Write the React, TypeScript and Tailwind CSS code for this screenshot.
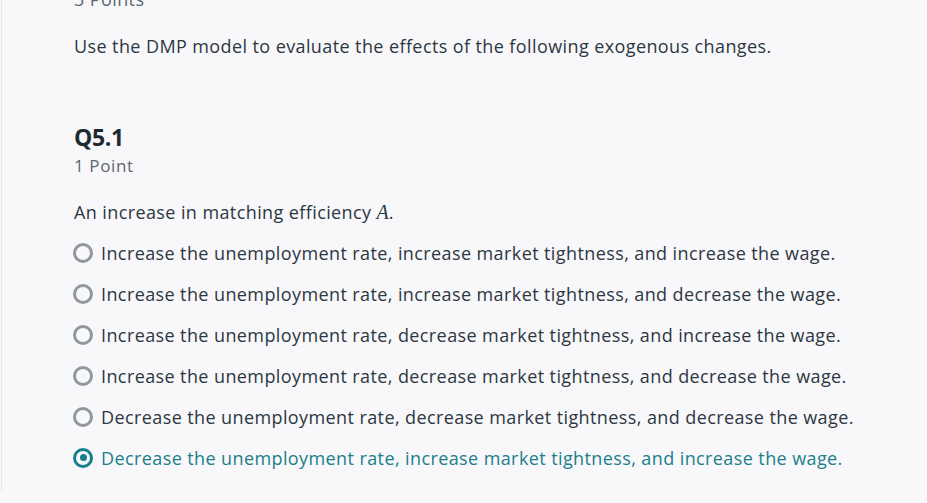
import { useState } from 'react'

const OPTIONS = [
  'Increase the unemployment rate, increase market tightness, and increase the wage.',
  'Increase the unemployment rate, increase market tightness, and decrease the wage.',
  'Increase the unemployment rate, decrease market tightness, and increase the wage.',
  'Increase the unemployment rate, decrease market tightness, and decrease the wage.',
  'Decrease the unemployment rate, decrease market tightness, and decrease the wage.',
  'Decrease the unemployment rate, increase market tightness, and increase the wage.',
]

function Radio({ checked }: { checked: boolean }) {
  return (
    <span
      className={`flex h-[20px] w-[20px] shrink-0 items-center justify-center rounded-full border-[3px] ${
        checked ? 'border-[#16808a]' : 'border-[#8f989f]'
      }`}
    >
      {checked && <span className="h-[7px] w-[7px] rounded-full bg-[#16808a]" />}
    </span>
  )
}

export default function App() {
  const [selected, setSelected] = useState(5)

  return (
    <div
      className="h-[503px] w-[927px] overflow-hidden bg-[#f8f8fa] text-[#2c3742] tracking-[0.4px]"
      style={{ fontFamily: '"Open Sans", "Liberation Sans", sans-serif' }}
    >
      <div className="ml-[1px] h-full border-l border-[#e3e5e8] pl-[72px]">
        <p className="-mt-[13px] text-[18px] leading-[24px] text-[#5c6770]">3 Points</p>

        <p className="mt-[23px] text-[18px] leading-[24px]">
          Use the DMP model to evaluate the effects of the following exogenous changes.
        </p>

        {/* Question 5.1 */}
        <h2 className="mt-[66px] text-[23px] font-bold leading-[26px] tracking-[-0.3px] text-[#1f2a30]">Q5.1</h2>
        <p className="mt-[5px] text-[17px] leading-[22px] tracking-[0.6px] text-[#5c6770]">1 Point</p>

        <p className="mt-[23px] text-[18px] leading-[24px]">
          An increase in matching efficiency{' '}
          <span
            className="text-[20px] italic tracking-normal"
            style={{ fontFamily: '"Liberation Serif", serif' }}
          >
            A
          </span>
          .
        </p>

        <div className="-ml-[1px] mt-[8px] flex flex-col">
          {OPTIONS.map((opt, i) => (
            <button
              key={i}
              onClick={() => setSelected(i)}
              className={`flex h-[41px] items-center gap-[8px] text-left text-[18px] leading-[24px] ${
                selected === i ? 'text-[#1b7f8a]' : ''
              }`}
            >
              <Radio checked={selected === i} />
              <span>{opt}</span>
            </button>
          ))}
        </div>
      </div>
    </div>
  )
}
